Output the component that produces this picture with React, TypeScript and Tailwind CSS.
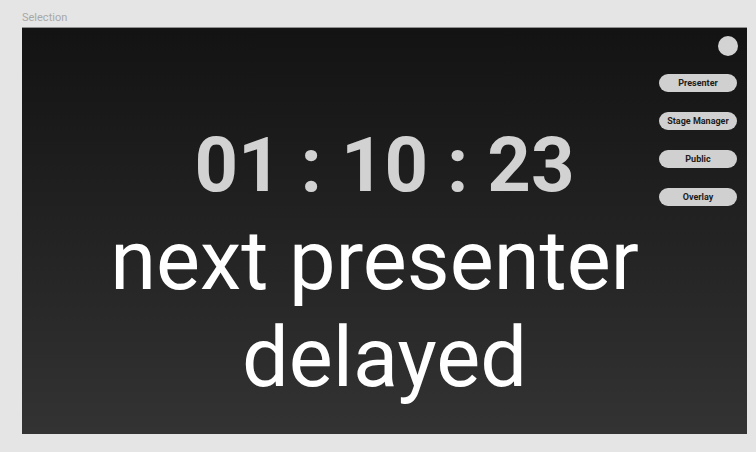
import React from "react";

const views = ["Presenter", "Stage Manager", "Public", "Overlay"];

export default function App() {
  return (
    <div className="w-[756px] h-[452px] bg-[#e5e5e5] overflow-hidden" style={{ fontFamily: "Roboto, 'Liberation Sans', sans-serif" }}>
      <div className="pl-[22px] pt-[10px]">
        <div className="text-[11px] leading-[16px] h-[17px] text-[#a8a8a8]">Selection</div>
        <div className="relative w-[725px] h-[407px] border-t border-[#8f8f8f] bg-gradient-to-b from-[#131313] to-[#333333]">
          {/* main text */}
          <div className="flex flex-col items-center">
            <div className="mt-[99px] text-[76px] leading-[76px] font-bold text-[#d2d2d2] whitespace-nowrap">
              01 : 10 : 23
            </div>
            <div className="mt-[9px] text-[83px] leading-[97px] text-white text-center whitespace-nowrap">
              <div className="pr-[20px]">next presenter</div>
              <div>delayed</div>
            </div>
          </div>
          {/* side controls */}
          <div className="absolute top-0 right-0 flex flex-col items-end pr-[9px] pt-[8px]">
            <div className="w-[20px] h-[20px] rounded-full bg-[#d3d3d3]" />
            <div className="mt-[18px] mr-px flex flex-col gap-[20px]">
              {views.map((v) => (
                <button
                  key={v}
                  className="w-[78px] h-[18px] rounded-full bg-[#d0d0d0] text-[9px] font-bold text-[#1c1c1c] leading-[18px]"
                >
                  {v}
                </button>
              ))}
            </div>
          </div>
        </div>
      </div>
    </div>
  );
}
